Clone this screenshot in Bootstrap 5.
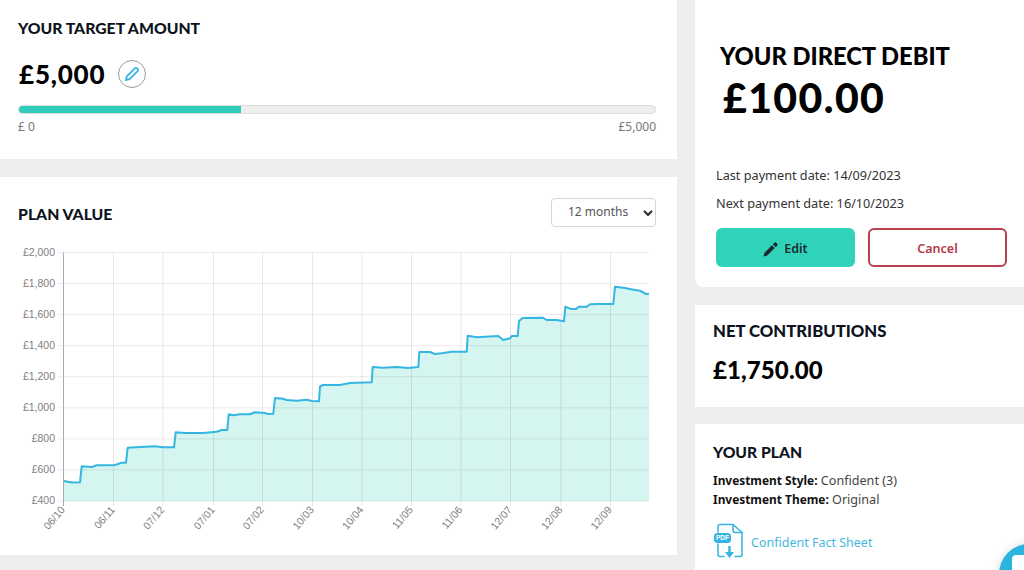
<!DOCTYPE html>
<html lang="en">
<head>
  <meta charset="UTF-8" />
  <meta name="viewport" content="width=device-width, initial-scale=1.0"/>
  <title>Your Plan</title>
  <link href="https://cdn.jsdelivr.net/npm/bootstrap@5.3.3/dist/css/bootstrap.min.css" rel="stylesheet">
  <style>
    html, body { height: 570px; overflow: hidden; }
    body { background: #eee; font-family: "Noto Sans", "Open Sans", sans-serif; color: #333; font-size: 13px; }
    .page-grid { display: grid; grid-template-columns: 677px 329px; column-gap: 18px; }
    .left-stack, .right-stack { display: flex; flex-direction: column; }
    .panel { background: #fff; }
    .head-title { font-family: Lato, sans-serif; font-weight: 900; font-size: 15.75px; color: #0d1420; margin: 0; line-height: 20px; }
    .money { font-family: Lato, sans-serif; font-weight: 900; color: #000; margin: 0; }
    .target-panel { height: 159px; padding: 18px 21px 0 18px; margin-bottom: 18px; }
    .target-row { display: flex; align-items: center; gap: 13px; margin: 20px 0 15px 1px; }
    .target-value { font-size: 26px; line-height: 32px; letter-spacing: .8px; }
    .pencil-ring { width: 28px; height: 28px; border: 1px solid #999; border-radius: 50%; background: #fff; padding: 0; }
    .track { height: 9px; background: #eee; border: 1px solid #ddd; border-radius: 5px; overflow: hidden; }
    .track-fill { background: #30cdbd; margin: -1px 0 0 -1px; height: 9px; }
    .scale-text { font-size: 12px; color: #777; line-height: 16px; margin-top: 5px; }
    .chart-panel { height: 378px; padding: 21px 21px 0 18px; }
    .chart-head { display: flex; justify-content: space-between; align-items: center; }
    .chart-head .head-title { padding-top: 2px; }
    .range-select { width: 105px; height: 29px; font-size: 12px; padding: 0 0 2px 16px; border: 1px solid #d5d5d5; border-radius: 4px; color: #555; background-color: #fff; background-image: url("data:image/svg+xml,%3csvg xmlns='http://www.w3.org/2000/svg' viewBox='0 0 16 16'%3e%3cpath fill='none' stroke='%23333' stroke-linecap='round' stroke-linejoin='round' stroke-width='3.4' d='M2.5 5.5 8 11l5.5-5.5'/%3e%3c/svg%3e"); background-size: 10px; background-position: right 2px center; }
    .chart-svg { display: block; margin: -1px 0 0 -18px; }
    .chart-svg text { font-family: "Liberation Sans", sans-serif; font-size: 10.5px; fill: #808080; }
    .debit-panel { height: 287px; padding: 42px 17px 0 21px; border-bottom-left-radius: 8px; margin-bottom: 18px; }
    .debit-title { font-family: Lato, sans-serif; font-weight: 900; font-size: 23.7px; line-height: 28px; color: #000; margin: 0 0 0 4px; }
    .debit-value { font-size: 41px; line-height: 50px; margin: 3px 0 0 7px; letter-spacing: 1.4px; }
    .pay-lines { margin-top: 38px; }
    .pay-line { margin: 0; line-height: 28px; font-size: 12.7px; color: #333; }
    .pay-actions { display: flex; gap: 13px; margin-top: 11px; }
    .pay-btn { width: 139px; height: 39px; font-size: 12.5px; font-weight: 600; border-radius: 6px; display: flex; align-items: center; justify-content: center; gap: 6px; padding: 3px 0 0; }
    .pay-edit { background: #30d3b9; border: 0; color: #1a2a30; }
    .pay-cancel { background: #fff; border: 2px solid #b8404f; color: #b23a48; }
    .net-panel { height: 102px; padding: 16px 18px 0; margin-bottom: 17px; }
    .net-panel .head-title { font-size: 16.7px; }
    .net-value { font-size: 24px; line-height: 30px; margin-top: 14px; letter-spacing: .1px; }
    .plan-panel { height: 146px; padding: 18px 18px 0; }
    .plan-panel .head-title { font-size: 15.7px; margin-bottom: 9px; }
    .plan-line { margin: 0; line-height: 19px; font-size: 12.6px; color: #444; }
    .plan-line b { color: #111; font-weight: 700; font-size: 11.9px; }
    .sheet-row { display: flex; align-items: center; gap: 7px; margin-top: 14px; margin-left: 1px; }
    .sheet-link { color: #45b8de; text-decoration: none; font-size: 12.5px; padding-top: 4px; }
    .pdf-tag { font-family: "Liberation Sans", sans-serif; font-size: 6.5px; font-weight: 700; fill: #fff; }
    .chat-bubble { position: fixed; left: 999px; top: 544px; width: 60px; height: 60px; border-radius: 50%; background: #29b5e0; box-shadow: 0 0 10px rgba(0,0,0,.15); }
    .chat-bubble svg { position: absolute; left: 13px; top: 11px; }
  </style>
</head>
<body>
  <div class="page-grid">
    <div class="left-stack">
      <div class="panel target-panel">
        <h2 class="head-title">YOUR TARGET AMOUNT</h2>
        <div class="target-row">
          <p class="money target-value">£5,000</p>
          <button class="pencil-ring d-flex align-items-center justify-content-center">
            <svg width="16" height="16" viewBox="0 0 16 16" fill="none" stroke="#35b4e4" stroke-width="1.8" stroke-linejoin="round"><path d="M2 14l.8-3.6 8-8a1.6 1.6 0 0 1 2.3 0l.5.5a1.6 1.6 0 0 1 0 2.3l-8 8z"/></svg>
          </button>
        </div>
        <div class="track"><div class="track-fill" id="targetFill"></div></div>
        <div class="d-flex justify-content-between scale-text"><span>£ 0</span><span>£5,000</span></div>
      </div>

      <div class="panel chart-panel">
        <div class="chart-head">
          <h2 class="head-title">PLAN VALUE</h2>
          <select class="form-select range-select"><option>12 months</option></select>
        </div>
        <svg class="chart-svg" id="planChart" width="677" height="320" viewBox="0 226 677 320"></svg>
      </div>
    </div>

    <div class="right-stack">
      <div class="panel debit-panel">
        <h2 class="debit-title">YOUR DIRECT DEBIT</h2>
        <p class="money debit-value">£100.00</p>
        <div class="pay-lines">
          <p class="pay-line">Last payment date: 14/09/2023</p>
          <p class="pay-line">Next payment date: 16/10/2023</p>
        </div>
        <div class="pay-actions">
          <button class="btn pay-btn pay-edit">
            <svg width="15" height="15" viewBox="0 0 16 16" fill="#1a2a30"><path d="M12.1.9a1.5 1.5 0 0 1 2.1 0l.9.9a1.5 1.5 0 0 1 0 2.1l-1.6 1.6-3-3zM9.5 3.5l3 3L4.6 14.4.6 15.4l1-4z"/></svg>
            Edit
          </button>
          <button class="btn pay-btn pay-cancel">Cancel</button>
        </div>
      </div>

      <div class="panel net-panel">
        <h2 class="head-title">NET CONTRIBUTIONS</h2>
        <p class="money net-value">£1,750.00</p>
      </div>

      <div class="panel plan-panel">
        <h2 class="head-title">YOUR PLAN</h2>
        <p class="plan-line"><b>Investment Style:</b> Confident (3)</p>
        <p class="plan-line"><b>Investment Theme:</b> Original</p>
        <div class="sheet-row">
          <svg width="30" height="36" viewBox="0 0 30 36" fill="none" stroke="#35b4e4" stroke-width="1.5" stroke-linecap="round">
            <path d="M4 9V3.5A2 2 0 0 1 6 1.500h13l9 8v22a2 2 0 0 1-2 2h-5M4 21v10.500a2 2 0 0 0 2 2h4"/>
            <path d="M19 1.500v6a2 2 0 0 0 2 2h7"/>
            <rect x="0" y="10" width="17" height="10" rx="3.500" fill="#35b4e4" stroke="none"/>
            <text class="pdf-tag" x="8.500" y="17.400" text-anchor="middle" stroke="none">PDF</text>
            <path d="M15.500 23v7" stroke-width="2.400" stroke-linecap="butt"/>
            <path d="M11 29h9l-4.500 6z" fill="#35b4e4" stroke="none"/>
          </svg>
          <a class="sheet-link" href="#">Confident Fact Sheet</a>
        </div>
      </div>
    </div>
  </div>

  <div class="chat-bubble">
    <svg width="26" height="24" viewBox="0 0 26 24" fill="#fff"><path d="M4 0h18a4 4 0 0 1 4 4v12a4 4 0 0 1-4 4H9l-6 4v-4a4 4 0 0 1-3-4V4a4 4 0 0 1 4-4z"/></svg>
  </div>

  <script src="https://cdn.jsdelivr.net/npm/bootstrap@5.3.3/dist/js/bootstrap.bundle.min.js"></script>
  <script>
    document.getElementById("targetFill").style.width = "35%";

    const chart = document.getElementById("planChart");
    const left = 63.5, right = 649, top0 = 252.5, bottom = 501;
    const xTicks = [[63.5,"06/10"],[113.5,"06/11"],[163,"07/12"],[213.5,"07/01"],[262.5,"07/02"],[312.5,"10/03"],[362,"10/04"],[411.5,"11/05"],[461,"11/06"],[510.5,"12/07"],[561,"12/08"],[610.5,"12/09"]];
    const line = [[63.5,481],[72,482.5],[80,482.3],[81.7,466.3],[91.7,467],[96.7,465.3],[105,465.3],[115,465],[121.7,462.7],[126,462.7],[127.7,447.7],[140,447],[155,446.3],[163,447.3],[174,447.3],[175.7,432.3],[185,433],[203,433],[216.7,431.7],[221.7,430],[227.3,430],[228.7,414.3],[233,415.3],[240,414.3],[250,414.3],[255,412.3],[265,413],[268,414],[273.3,413.7],[275,398],[283,398.7],[286.7,400],[296.7,400.7],[306.7,399.7],[311.7,401],[319,401.3],[320,386.5],[323,385],[340,385],[350,383],[371.7,382.3],[372.7,367],[383,367.7],[396.7,367],[408,368],[418.3,367],[419.3,352],[430,352],[435,354],[441.7,353.3],[451.7,351.7],[466.7,351.7],[467.7,335.7],[476.7,337.3],[498.3,336],[503.3,340],[510,338.3],[511.7,336],[517.7,336],[519,321],[522.7,318],[542.7,317.7],[546.7,320],[556.7,320],[564,321.3],[565.3,306.7],[570,308.7],[576,309],[578.7,306.7],[586.7,306.7],[590,304.3],[598.3,304],[613.3,304],[615,286.7],[623.3,287.7],[635,290],[640,290.7],[646,294],[649,293.7]];

    let html = "";
    const pts = line.map(p => p.join(",")).join(" ");
    html += `<polygon points="${left},${bottom} ${pts} ${right},${bottom}" fill="#d5f5f0"/>`;

    // horizontal grid and y labels
    for (let i = 0; i <= 8; i++) {
      const y = top0 + (bottom - top0) * i / 8;
      const val = "£" + (2000 - i * 200).toLocaleString("en-GB");
      html += `<line x1="58" x2="${right}" y1="${y}" y2="${y}" stroke="#000" stroke-opacity=".08"/>`;
      html += `<text x="55" y="${y + 3}" text-anchor="end">${val}</text>`;
    }
    // vertical grid and rotated x labels
    xTicks.forEach(([x, label], i) => {
      html += `<line x1="${x}" x2="${x}" y1="${top0}" y2="${bottom + 5}" stroke="${i ? "#000" : "#aaa"}" stroke-opacity="${i ? .09 : 1}"/>`;
      html += `<text transform="translate(${x + 2},${bottom + 9}) rotate(-50)" text-anchor="end">${label}</text>`;
    });
    html += `<polyline points="${pts}" fill="none" stroke="#35b6e2" stroke-width="2" stroke-linejoin="round"/>`;
    chart.innerHTML = html;
  </script>
</body>
</html>
